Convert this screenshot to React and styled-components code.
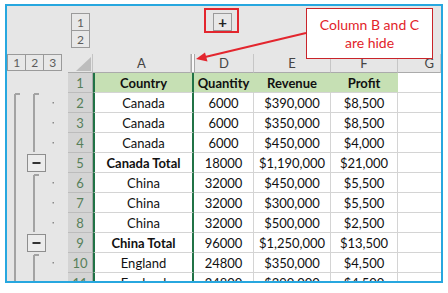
import styled, { createGlobalStyle } from "styled-components";

const GlobalStyle = createGlobalStyle`
  body {
    margin: 0;
    background: #fff;
    font-family: Lato, "Liberation Sans", sans-serif;
  }
`;

const COLS_HEAD = "61px 25px 98px 4px 59px 77px 67px 1fr";
const COLS_DATA = "25px 101px 60px 77px 67px 1fr";

const Frame = styled.div`
  position: relative;
  margin: 4px 0 0 5px;
  width: 438px;
  height: 279px;
  box-sizing: border-box;
  border: 2px solid #27a7df;
  background: #e6e6e6;
  overflow: hidden;
  display: flex;
  flex-direction: column;
`;

const TopBand = styled.div`
  height: 48px;
  flex-shrink: 0;
  display: grid;
  grid-template-columns: ${COLS_HEAD};
`;

const LevelStack = styled.div`
  grid-column: 2;
  padding: 7px 0 0 3px;
  display: flex;
  flex-direction: column;
`;

const OutlineBtn = styled.div`
  width: 19px;
  height: ${({ $h }) => $h || 18}px;
  box-sizing: border-box;
  border: 1px solid #9a9a9a;
  margin-top: ${({ $stack }) => ($stack ? -1 : 0)}px;
  margin-left: ${({ $row }) => ($row ? 0.3 : 0)}px;
  background: #e8e8e8;
  color: #5c5c5c;
  font-size: 12px;
  display: flex;
  align-items: center;
  justify-content: center;
`;

const PlusSlot = styled.div`
  grid-column: 5;
  padding: 7px 0 0 18px;
`;

const PlusBtn = styled(OutlineBtn)`
  color: #222;
  font-weight: 700;
  font-size: 15px;
  line-height: 1;
`;

const HeaderRow = styled.div`
  height: 19px;
  flex-shrink: 0;
  display: grid;
  grid-template-columns: ${COLS_HEAD};
`;

const LevelRow = styled.div`
  display: flex;
  align-items: flex-start;
`;

const Corner = styled.div`
  border-right: 1px solid #c4c4c4;
  border-bottom: 1px solid #ababab;
  box-sizing: border-box;
  display: flex;
  align-items: flex-end;
  justify-content: flex-end;
  padding: 0 1px 1px 0;
`;

const ColHead = styled.div`
  box-sizing: border-box;
  border-right: 1px solid #c6c6c6;
  border-bottom: 1px solid #ababab;
  color: #444;
  font-size: 13px;
  display: flex;
  align-items: center;
  justify-content: ${({ $align }) => $align || "center"};
  padding-right: ${({ $align }) => ($align ? 6 : 0)}px;
`;

const HiddenMark = styled.div`
  background: #fafafa;
  border-left: 1px solid #a8a8a8;
  border-right: 1px solid #a8a8a8;
  border-bottom: 1px solid #ababab;
  box-sizing: border-box;
`;

const Body = styled.div`
  display: flex;
  flex: 1;
  min-height: 0;
`;

const Gutter = styled.div`
  width: 61px;
  flex-shrink: 0;
`;

const Rows = styled.div`
  flex: 1;
  display: flex;
  flex-direction: column;
`;

const Row = styled.div`
  height: 20px;
  flex-shrink: 0;
  display: grid;
  grid-template-columns: ${COLS_DATA};
`;

const RowHead = styled.div`
  box-sizing: border-box;
  background: #d4d4d4;
  border-bottom: 1px solid #bcbcbc;
  border-right: 1px solid #a9a9a9;
  color: #567f59;
  font-size: 13px;
  display: flex;
  align-items: center;
  justify-content: center;
`;

const Cell = styled.div`
  box-sizing: border-box;
  background: ${({ $head }) => ($head ? "#c6e0b4" : "#fff")};
  border-bottom: 1px solid #d4d4d4;
  border-right: 1px solid ${({ $head }) => ($head ? "#c6e0b4" : "#d4d4d4")};
  font-size: 13px;
  font-weight: ${({ $bold }) => ($bold ? 700 : 400)};
  color: #111;
  display: flex;
  align-items: center;
  justify-content: center;
  white-space: nowrap;
  ${({ $sel }) =>
    $sel &&
    `
    border-left: 2px solid #217346;
    border-right: 2px solid #217346;
  `}
`;

const Blank = styled(Cell)`
  border-right: none;
`;

const PlusMark = styled.div`
  position: absolute;
  left: 197px;
  top: 2px;
  width: 35px;
  height: 25px;
  box-sizing: border-box;
  border: 2px solid #e3262e;
`;

const Callout = styled.div`
  position: absolute;
  left: 299px;
  top: 2px;
  width: 127px;
  height: 51px;
  box-sizing: border-box;
  border: 1px solid #c9242a;
  background: #fff;
  color: #e2232a;
  font-size: 14px;
  line-height: 18px;
  text-align: center;
  padding-top: 7px;
`;

const Overlay = styled.svg`
  position: absolute;
  left: 0;
  top: 0;
  pointer-events: none;
`;

const data = [
  ["Canada", "6000", "$390,000", "$8,500"],
  ["Canada", "6000", "$350,000", "$8,500"],
  ["Canada", "6000", "$450,000", "$4,000"],
  ["Canada Total", "18000", "$1,190,000", "$21,000", true],
  ["China", "32000", "$450,000", "$5,500"],
  ["China", "32000", "$300,000", "$5,500"],
  ["China", "32000", "$500,000", "$2,500"],
  ["China Total", "96000", "$1,250,000", "$13,500", true],
  ["England", "24800", "$350,000", "$4,500"],
  ["England", "24800", "$390,000", "$4,500"],
];

function OutlineDrawing() {
  const line = "#a3a3a3";
  const dots = [30, 50, 70, 110, 130, 150, 190, 210];
  const minus = [81, 161];
  return (
    <svg width="61" height="220" viewBox="0 0 61 220">
      <path d="M8 21 V220 M8 21 H13" stroke={line} strokeWidth="2" fill="none" />
      <path d="M27 21 V79 M27 21 H32" stroke={line} strokeWidth="2" fill="none" />
      <path d="M27 102 V159 M27 102 H32" stroke={line} strokeWidth="2" fill="none" />
      <path d="M27 182 V220 M27 182 H32" stroke={line} strokeWidth="2" fill="none" />
      {dots.map((y) => (
        <rect key={y} x="45.5" y={y - 1} width="1.5" height="1.5" fill="#8a8a8a" />
      ))}
      {minus.map((y) => (
        <g key={y}>
          <rect x="20.5" y={y + 0.5} width="18" height="17" fill="#ececec" stroke="#8e8e8e" />
          <rect x="25.5" y={y + 8} width="8" height="2" fill="#333" />
        </g>
      ))}
    </svg>
  );
}

export default function App() {
  return (
    <>
      <GlobalStyle />
      <Frame>
        <TopBand>
          <LevelStack>
            <OutlineBtn>1</OutlineBtn>
            <OutlineBtn $stack>2</OutlineBtn>
          </LevelStack>
          <PlusSlot>
            <PlusBtn>+</PlusBtn>
          </PlusSlot>
        </TopBand>
        <HeaderRow>
          <LevelRow>
            <OutlineBtn $h={17} $row>1</OutlineBtn>
            <OutlineBtn $h={17} style={{ marginLeft: -1 }}>2</OutlineBtn>
            <OutlineBtn $h={17} style={{ marginLeft: -1 }}>3</OutlineBtn>
          </LevelRow>
          <Corner>
            <svg width="15" height="14" viewBox="0 0 15 14">
              <polygon points="15,0 15,14 0,14" fill="#bdbdbd" />
            </svg>
          </Corner>
          <ColHead>A</ColHead>
          <HiddenMark />
          <ColHead>D</ColHead>
          <ColHead>E</ColHead>
          <ColHead>F</ColHead>
          <ColHead $align="flex-end">G</ColHead>
        </HeaderRow>
        <Body>
          <Gutter>
            <OutlineDrawing />
          </Gutter>
          <Rows>
            <Row>
              <RowHead>1</RowHead>
              <Cell $head $bold $sel>Country</Cell>
              <Cell $head $bold>Quantity</Cell>
              <Cell $head $bold>Revenue</Cell>
              <Cell $head $bold>Profit</Cell>
              <Blank />
            </Row>
            {data.map(([country, qty, rev, profit, total], i) => (
              <Row key={i}>
                <RowHead>{i + 2}</RowHead>
                <Cell $sel $bold={total}>{country}</Cell>
                <Cell>{qty}</Cell>
                <Cell>{rev}</Cell>
                <Cell>{profit}</Cell>
                <Blank />
              </Row>
            ))}
          </Rows>
        </Body>
        <PlusMark />
        <Callout>
          Column B and C
          <br />
          are hide
        </Callout>
        <Overlay width="434" height="275" viewBox="0 0 434 275">
          <line x1="299" y1="27" x2="196" y2="51.5" stroke="#e3262e" strokeWidth="2" />
          <polygon points="189,53 198,46.5 200.5,55.5" fill="#e3262e" />
        </Overlay>
      </Frame>
    </>
  );
}
